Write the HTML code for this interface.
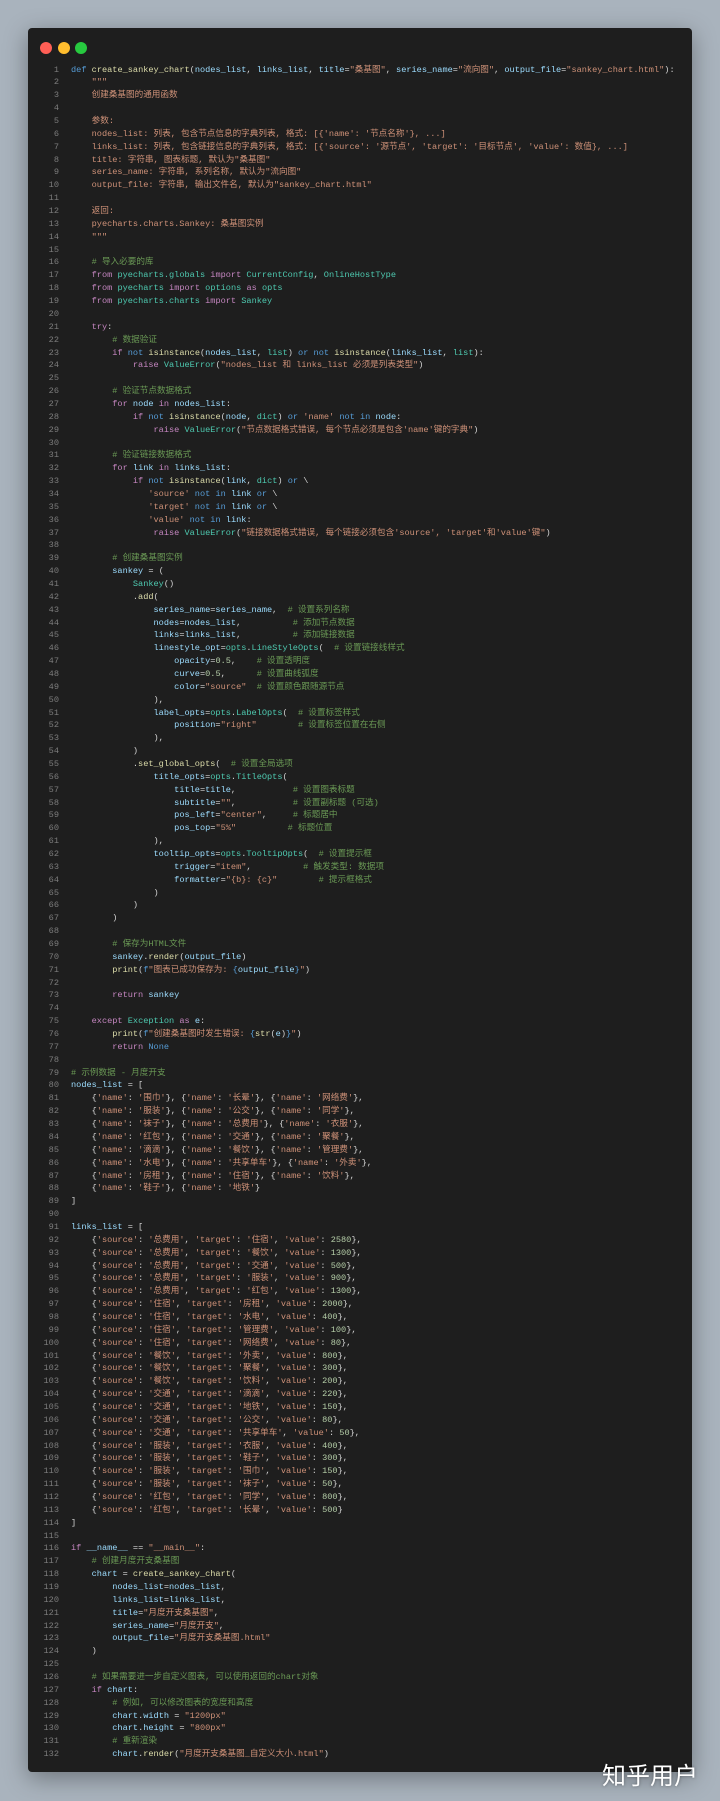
<!DOCTYPE html>
<html><head><meta charset="utf-8"><style>
html,body{margin:0;padding:0}
body{width:720px;height:1801px;background:#a9b3bd;position:relative;overflow:hidden;font-family:"Liberation Sans","Noto Sans CJK SC",sans-serif}
.win{position:absolute;left:28px;top:28px;width:664px;height:1744px;background:#1e1e1e;border-radius:4px;box-shadow:0 6px 24px rgba(0,0,0,.35)}
.dot{position:absolute;top:42px;width:12px;height:12px;border-radius:50%}
.ln{position:absolute;left:28px;top:63.6px;width:31px;text-align:right;color:#7d7d7d}
.code{position:absolute;left:71px;top:63.6px;color:#d4d4d4}
pre{margin:0;font-family:"Liberation Mono","Noto Sans CJK SC",monospace;font-size:8.6px;line-height:12.855px;white-space:pre}
.k{color:#569cd6}.c{color:#c586c0}.s{color:#ce9178}.m{color:#6a9955}.v{color:#9cdcfe}.t{color:#4ec9b0}.f{color:#dcdcaa}.n{color:#b5cea8}
.wm{position:absolute;right:22px;top:1756px;color:#fff;font-size:24px;font-family:"Noto Sans CJK SC",sans-serif;text-shadow:0 0 3px rgba(0,0,0,.4)}
</style></head><body>
<div class="win"></div>
<div class="dot" style="left:40px;background:#ff5f56"></div>
<div class="dot" style="left:58px;background:#ffbd2e"></div>
<div class="dot" style="left:75px;background:#27c93f"></div>
<pre class="ln">1
2
3
4
5
6
7
8
9
10
11
12
13
14
15
16
17
18
19
20
21
22
23
24
25
26
27
28
29
30
31
32
33
34
35
36
37
38
39
40
41
42
43
44
45
46
47
48
49
50
51
52
53
54
55
56
57
58
59
60
61
62
63
64
65
66
67
68
69
70
71
72
73
74
75
76
77
78
79
80
81
82
83
84
85
86
87
88
89
90
91
92
93
94
95
96
97
98
99
100
101
102
103
104
105
106
107
108
109
110
111
112
113
114
115
116
117
118
119
120
121
122
123
124
125
126
127
128
129
130
131
132</pre>
<pre class="code"><span class="k">def</span> <span class="f">create_sankey_chart</span>(<span class="v">nodes_list</span>, <span class="v">links_list</span>, <span class="v">title</span>=<span class="s">"桑基图"</span>, <span class="v">series_name</span>=<span class="s">"流向图"</span>, <span class="v">output_file</span>=<span class="s">"sankey_chart.html"</span>):
<span class="s">    """
    创建桑基图的通用函数

    参数:
    nodes_list: 列表, 包含节点信息的字典列表, 格式: [{'name': '节点名称'}, ...]
    links_list: 列表, 包含链接信息的字典列表, 格式: [{'source': '源节点', 'target': '目标节点', 'value': 数值}, ...]
    title: 字符串, 图表标题, 默认为"桑基图"
    series_name: 字符串, 系列名称, 默认为"流向图"
    output_file: 字符串, 输出文件名, 默认为"sankey_chart.html"

    返回:
    pyecharts.charts.Sankey: 桑基图实例
    """</span>

    <span class="m"># 导入必要的库</span>
    <span class="c">from</span> <span class="t">pyecharts.globals</span> <span class="c">import</span> <span class="t">CurrentConfig</span>, <span class="t">OnlineHostType</span>
    <span class="c">from</span> <span class="t">pyecharts</span> <span class="c">import</span> <span class="t">options</span> <span class="c">as</span> <span class="t">opts</span>
    <span class="c">from</span> <span class="t">pyecharts.charts</span> <span class="c">import</span> <span class="t">Sankey</span>

    <span class="c">try</span>:
        <span class="m"># 数据验证</span>
        <span class="c">if</span> <span class="k">not</span> <span class="f">isinstance</span>(<span class="v">nodes_list</span>, <span class="t">list</span>) <span class="k">or</span> <span class="k">not</span> <span class="f">isinstance</span>(<span class="v">links_list</span>, <span class="t">list</span>):
            <span class="c">raise</span> <span class="t">ValueError</span>(<span class="s">"nodes_list 和 links_list 必须是列表类型"</span>)

        <span class="m"># 验证节点数据格式</span>
        <span class="c">for</span> <span class="v">node</span> <span class="c">in</span> <span class="v">nodes_list</span>:
            <span class="c">if</span> <span class="k">not</span> <span class="f">isinstance</span>(<span class="v">node</span>, <span class="t">dict</span>) <span class="k">or</span> <span class="s">'name'</span> <span class="k">not</span> <span class="k">in</span> <span class="v">node</span>:
                <span class="c">raise</span> <span class="t">ValueError</span>(<span class="s">"节点数据格式错误, 每个节点必须是包含'name'键的字典"</span>)

        <span class="m"># 验证链接数据格式</span>
        <span class="c">for</span> <span class="v">link</span> <span class="c">in</span> <span class="v">links_list</span>:
            <span class="c">if</span> <span class="k">not</span> <span class="f">isinstance</span>(<span class="v">link</span>, <span class="t">dict</span>) <span class="k">or</span> \
               <span class="s">'source'</span> <span class="k">not</span> <span class="k">in</span> <span class="v">link</span> <span class="k">or</span> \
               <span class="s">'target'</span> <span class="k">not</span> <span class="k">in</span> <span class="v">link</span> <span class="k">or</span> \
               <span class="s">'value'</span> <span class="k">not</span> <span class="k">in</span> <span class="v">link</span>:
                <span class="c">raise</span> <span class="t">ValueError</span>(<span class="s">"链接数据格式错误, 每个链接必须包含'source', 'target'和'value'键"</span>)

        <span class="m"># 创建桑基图实例</span>
        <span class="v">sankey</span> = (
            <span class="t">Sankey</span>()
            .<span class="f">add</span>(
                <span class="v">series_name</span>=<span class="v">series_name</span>,  <span class="m"># 设置系列名称</span>
                <span class="v">nodes</span>=<span class="v">nodes_list</span>,          <span class="m"># 添加节点数据</span>
                <span class="v">links</span>=<span class="v">links_list</span>,          <span class="m"># 添加链接数据</span>
                <span class="v">linestyle_opt</span>=<span class="t">opts</span>.<span class="t">LineStyleOpts</span>(  <span class="m"># 设置链接线样式</span>
                    <span class="v">opacity</span>=<span class="n">0.5</span>,    <span class="m"># 设置透明度</span>
                    <span class="v">curve</span>=<span class="n">0.5</span>,      <span class="m"># 设置曲线弧度</span>
                    <span class="v">color</span>=<span class="s">"source"</span>  <span class="m"># 设置颜色跟随源节点</span>
                ),
                <span class="v">label_opts</span>=<span class="t">opts</span>.<span class="t">LabelOpts</span>(  <span class="m"># 设置标签样式</span>
                    <span class="v">position</span>=<span class="s">"right"</span>        <span class="m"># 设置标签位置在右侧</span>
                ),
            )
            .<span class="f">set_global_opts</span>(  <span class="m"># 设置全局选项</span>
                <span class="v">title_opts</span>=<span class="t">opts</span>.<span class="t">TitleOpts</span>(
                    <span class="v">title</span>=<span class="v">title</span>,           <span class="m"># 设置图表标题</span>
                    <span class="v">subtitle</span>=<span class="s">""</span>,           <span class="m"># 设置副标题 (可选)</span>
                    <span class="v">pos_left</span>=<span class="s">"center"</span>,     <span class="m"># 标题居中</span>
                    <span class="v">pos_top</span>=<span class="s">"5%"</span>          <span class="m"># 标题位置</span>
                ),
                <span class="v">tooltip_opts</span>=<span class="t">opts</span>.<span class="t">TooltipOpts</span>(  <span class="m"># 设置提示框</span>
                    <span class="v">trigger</span>=<span class="s">"item"</span>,          <span class="m"># 触发类型: 数据项</span>
                    <span class="v">formatter</span>=<span class="s">"{b}: {c}"</span>        <span class="m"># 提示框格式</span>
                )
            )
        )

        <span class="m"># 保存为HTML文件</span>
        <span class="v">sankey</span>.<span class="f">render</span>(<span class="v">output_file</span>)
        <span class="f">print</span>(<span class="k">f</span><span class="s">"图表已成功保存为: </span><span class="k">{</span><span class="v">output_file</span><span class="k">}</span><span class="s">"</span>)

        <span class="c">return</span> <span class="v">sankey</span>

    <span class="c">except</span> <span class="t">Exception</span> <span class="c">as</span> <span class="v">e</span>:
        <span class="f">print</span>(<span class="k">f</span><span class="s">"创建桑基图时发生错误: </span><span class="k">{</span><span class="f">str</span>(<span class="v">e</span>)<span class="k">}</span><span class="s">"</span>)
        <span class="c">return</span> <span class="k">None</span>

<span class="m"># 示例数据 - 月度开支</span>
<span class="v">nodes_list</span> = [
    {<span class="s">'name'</span>: <span class="s">'围巾'</span>}, {<span class="s">'name'</span>: <span class="s">'长晕'</span>}, {<span class="s">'name'</span>: <span class="s">'网络费'</span>},
    {<span class="s">'name'</span>: <span class="s">'服装'</span>}, {<span class="s">'name'</span>: <span class="s">'公交'</span>}, {<span class="s">'name'</span>: <span class="s">'同学'</span>},
    {<span class="s">'name'</span>: <span class="s">'袜子'</span>}, {<span class="s">'name'</span>: <span class="s">'总费用'</span>}, {<span class="s">'name'</span>: <span class="s">'衣服'</span>},
    {<span class="s">'name'</span>: <span class="s">'红包'</span>}, {<span class="s">'name'</span>: <span class="s">'交通'</span>}, {<span class="s">'name'</span>: <span class="s">'聚餐'</span>},
    {<span class="s">'name'</span>: <span class="s">'滴滴'</span>}, {<span class="s">'name'</span>: <span class="s">'餐饮'</span>}, {<span class="s">'name'</span>: <span class="s">'管理费'</span>},
    {<span class="s">'name'</span>: <span class="s">'水电'</span>}, {<span class="s">'name'</span>: <span class="s">'共享单车'</span>}, {<span class="s">'name'</span>: <span class="s">'外卖'</span>},
    {<span class="s">'name'</span>: <span class="s">'房租'</span>}, {<span class="s">'name'</span>: <span class="s">'住宿'</span>}, {<span class="s">'name'</span>: <span class="s">'饮料'</span>},
    {<span class="s">'name'</span>: <span class="s">'鞋子'</span>}, {<span class="s">'name'</span>: <span class="s">'地铁'</span>}
]

<span class="v">links_list</span> = [
    {<span class="s">'source'</span>: <span class="s">'总费用'</span>, <span class="s">'target'</span>: <span class="s">'住宿'</span>, <span class="s">'value'</span>: <span class="n">2580</span>},
    {<span class="s">'source'</span>: <span class="s">'总费用'</span>, <span class="s">'target'</span>: <span class="s">'餐饮'</span>, <span class="s">'value'</span>: <span class="n">1300</span>},
    {<span class="s">'source'</span>: <span class="s">'总费用'</span>, <span class="s">'target'</span>: <span class="s">'交通'</span>, <span class="s">'value'</span>: <span class="n">500</span>},
    {<span class="s">'source'</span>: <span class="s">'总费用'</span>, <span class="s">'target'</span>: <span class="s">'服装'</span>, <span class="s">'value'</span>: <span class="n">900</span>},
    {<span class="s">'source'</span>: <span class="s">'总费用'</span>, <span class="s">'target'</span>: <span class="s">'红包'</span>, <span class="s">'value'</span>: <span class="n">1300</span>},
    {<span class="s">'source'</span>: <span class="s">'住宿'</span>, <span class="s">'target'</span>: <span class="s">'房租'</span>, <span class="s">'value'</span>: <span class="n">2000</span>},
    {<span class="s">'source'</span>: <span class="s">'住宿'</span>, <span class="s">'target'</span>: <span class="s">'水电'</span>, <span class="s">'value'</span>: <span class="n">400</span>},
    {<span class="s">'source'</span>: <span class="s">'住宿'</span>, <span class="s">'target'</span>: <span class="s">'管理费'</span>, <span class="s">'value'</span>: <span class="n">100</span>},
    {<span class="s">'source'</span>: <span class="s">'住宿'</span>, <span class="s">'target'</span>: <span class="s">'网络费'</span>, <span class="s">'value'</span>: <span class="n">80</span>},
    {<span class="s">'source'</span>: <span class="s">'餐饮'</span>, <span class="s">'target'</span>: <span class="s">'外卖'</span>, <span class="s">'value'</span>: <span class="n">800</span>},
    {<span class="s">'source'</span>: <span class="s">'餐饮'</span>, <span class="s">'target'</span>: <span class="s">'聚餐'</span>, <span class="s">'value'</span>: <span class="n">300</span>},
    {<span class="s">'source'</span>: <span class="s">'餐饮'</span>, <span class="s">'target'</span>: <span class="s">'饮料'</span>, <span class="s">'value'</span>: <span class="n">200</span>},
    {<span class="s">'source'</span>: <span class="s">'交通'</span>, <span class="s">'target'</span>: <span class="s">'滴滴'</span>, <span class="s">'value'</span>: <span class="n">220</span>},
    {<span class="s">'source'</span>: <span class="s">'交通'</span>, <span class="s">'target'</span>: <span class="s">'地铁'</span>, <span class="s">'value'</span>: <span class="n">150</span>},
    {<span class="s">'source'</span>: <span class="s">'交通'</span>, <span class="s">'target'</span>: <span class="s">'公交'</span>, <span class="s">'value'</span>: <span class="n">80</span>},
    {<span class="s">'source'</span>: <span class="s">'交通'</span>, <span class="s">'target'</span>: <span class="s">'共享单车'</span>, <span class="s">'value'</span>: <span class="n">50</span>},
    {<span class="s">'source'</span>: <span class="s">'服装'</span>, <span class="s">'target'</span>: <span class="s">'衣服'</span>, <span class="s">'value'</span>: <span class="n">400</span>},
    {<span class="s">'source'</span>: <span class="s">'服装'</span>, <span class="s">'target'</span>: <span class="s">'鞋子'</span>, <span class="s">'value'</span>: <span class="n">300</span>},
    {<span class="s">'source'</span>: <span class="s">'服装'</span>, <span class="s">'target'</span>: <span class="s">'围巾'</span>, <span class="s">'value'</span>: <span class="n">150</span>},
    {<span class="s">'source'</span>: <span class="s">'服装'</span>, <span class="s">'target'</span>: <span class="s">'袜子'</span>, <span class="s">'value'</span>: <span class="n">50</span>},
    {<span class="s">'source'</span>: <span class="s">'红包'</span>, <span class="s">'target'</span>: <span class="s">'同学'</span>, <span class="s">'value'</span>: <span class="n">800</span>},
    {<span class="s">'source'</span>: <span class="s">'红包'</span>, <span class="s">'target'</span>: <span class="s">'长晕'</span>, <span class="s">'value'</span>: <span class="n">500</span>}
]

<span class="c">if</span> <span class="v">__name__</span> == <span class="s">"__main__"</span>:
    <span class="m"># 创建月度开支桑基图</span>
    <span class="v">chart</span> = <span class="f">create_sankey_chart</span>(
        <span class="v">nodes_list</span>=<span class="v">nodes_list</span>,
        <span class="v">links_list</span>=<span class="v">links_list</span>,
        <span class="v">title</span>=<span class="s">"月度开支桑基图"</span>,
        <span class="v">series_name</span>=<span class="s">"月度开支"</span>,
        <span class="v">output_file</span>=<span class="s">"月度开支桑基图.html"</span>
    )

    <span class="m"># 如果需要进一步自定义图表, 可以使用返回的chart对象</span>
    <span class="c">if</span> <span class="v">chart</span>:
        <span class="m"># 例如, 可以修改图表的宽度和高度</span>
        <span class="v">chart</span>.<span class="v">width</span> = <span class="s">"1200px"</span>
        <span class="v">chart</span>.<span class="v">height</span> = <span class="s">"800px"</span>
        <span class="m"># 重新渲染</span>
        <span class="v">chart</span>.<span class="f">render</span>(<span class="s">"月度开支桑基图_自定义大小.html"</span>)</pre>
<div class="wm">知乎用户</div>
</body></html>
